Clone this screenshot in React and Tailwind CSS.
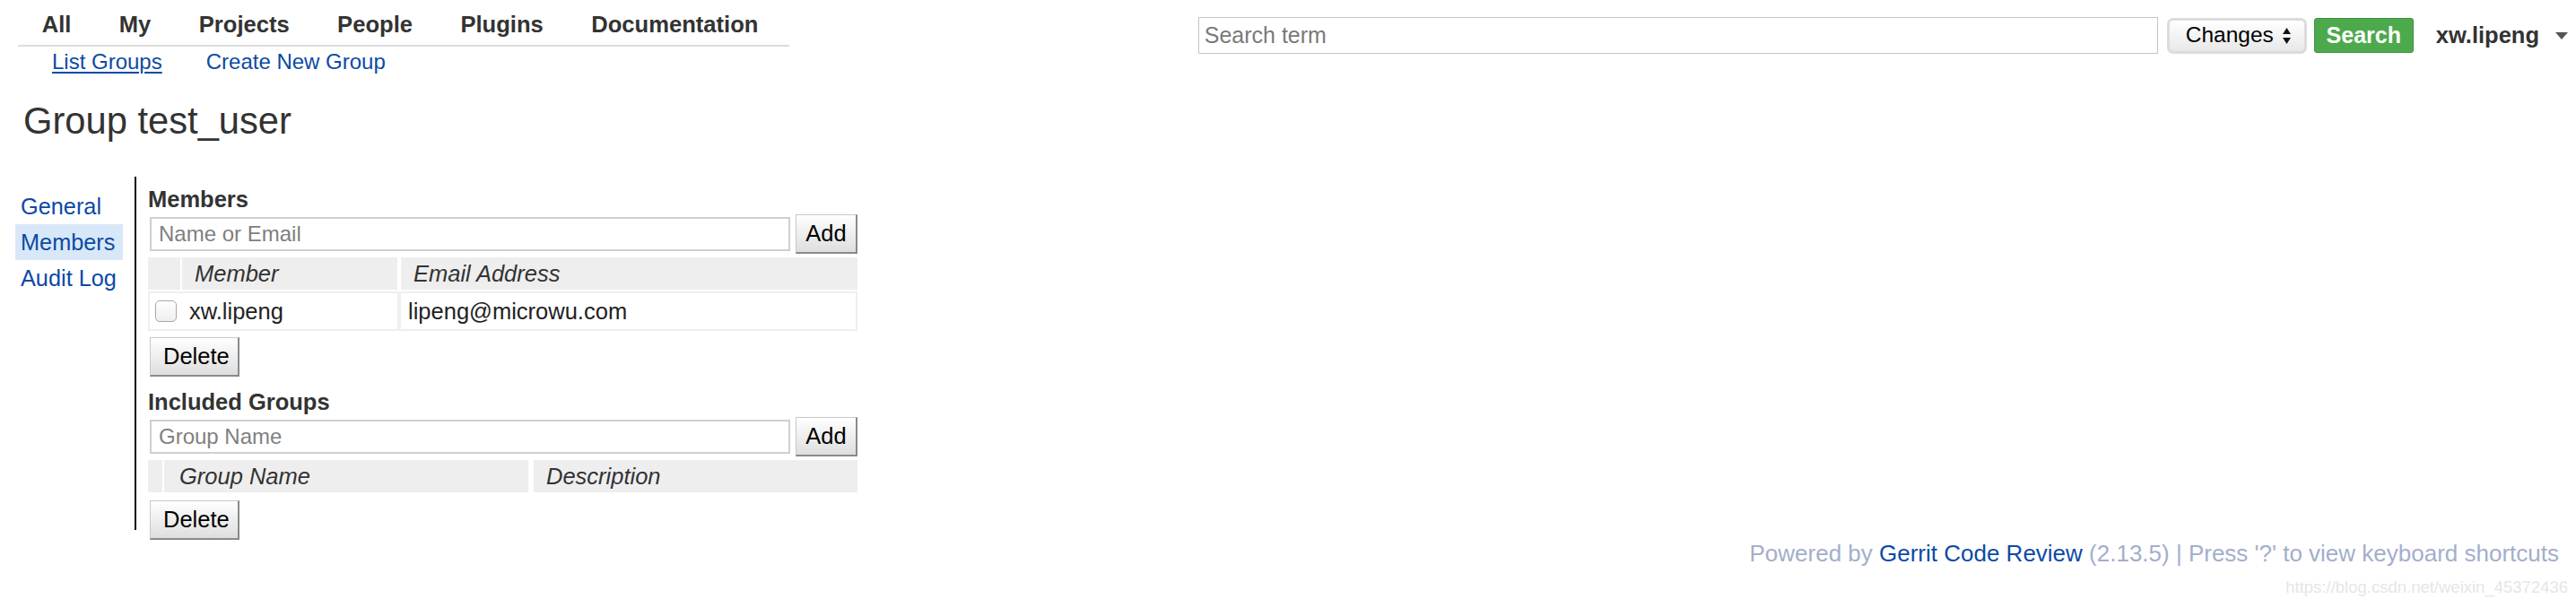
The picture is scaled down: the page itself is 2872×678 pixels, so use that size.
import React from 'react';

const NAV = ['All', 'My', 'Projects', 'People', 'Plugins', 'Documentation'];

function GrayButton({ children, className = '' }) {
  return (
    <button
      className={`h-[44px] border border-[#c8c8c8] border-r-[#8a8a8a] border-b-[#8a8a8a] border-r-2 border-b-2 bg-gradient-to-b from-white to-[#dedede] px-[14px] text-[25.5px] leading-none text-black ${className}`}
    >
      {children}
    </button>
  );
}

function HeadCell({ children, className = '' }) {
  return (
    <div className={`flex h-full items-center bg-[#eeeeee] pl-[14px] italic text-[25.5px] text-[#333] ${className}`}>
      {children}
    </div>
  );
}

function AddRow({ placeholder }) {
  return (
    <div className="flex items-center gap-[6px]">
      <input
        placeholder={placeholder}
        className="ml-[2px] h-[38px] w-[714px] border-2 border-[#cfcfcf] px-[8px] text-[24px] text-[#333] placeholder:text-[#808080] outline-none"
      />
      <GrayButton className="w-[69px] !px-0">Add</GrayButton>
    </div>
  );
}

export default function App() {
  return (
    <div className="relative h-[678px] w-[2872px] overflow-hidden bg-white font-['Liberation_Sans',Arial,sans-serif] text-[#333]">
      {/* Top bar */}
      <div className="flex items-start justify-between">
        <div>
          <div className="ml-[20px] flex w-[860px] border-b-2 border-[#dddddd] pt-[12px] pb-[8px]">
            {NAV.map(item => (
              <span key={item} className="px-[26.7px] text-[25.6px] font-bold leading-[30px] text-[#333]">
                {item}
              </span>
            ))}
          </div>
          <div className="mt-[3px] ml-[58px] flex gap-[49px] text-[24px] leading-[28px] text-[#0c4aa6]">
            <a className="underline underline-offset-[3px]">List Groups</a>
            <a>Create New Group</a>
          </div>
        </div>

        <div className="flex items-center pt-[19px] pr-[9px]">
          <input
            placeholder="Search term"
            className="h-[41px] w-[1070px] border border-[#c4c4c4] px-[6px] text-[25px] text-[#333] placeholder:text-[#7a7a7a] outline-none"
          />
          <div className="ml-[10px] flex h-[40px] w-[156px] items-center justify-between rounded-[7px] border-[3px] border-[#dcdcdc] bg-gradient-to-b from-white to-[#e8e8e8] pr-[14px] pl-[18px] text-[24.5px] text-black">
            <span>Changes</span>
            <svg width="11" height="20" viewBox="0 0 11 20">
              <path d="M5.5 1 L10 8 H1 Z" fill="#111" />
              <path d="M5.5 19 L10 12 H1 Z" fill="#111" />
            </svg>
          </div>
          <button className="ml-[8px] h-[39px] w-[111px] rounded-[3px] border border-[#3e913e] bg-[#4caa4c] text-[25px] font-bold text-white">
            Search
          </button>
          <span className="ml-[25px] text-[25.5px] font-bold text-[#333]">xw.lipeng</span>
          <svg className="ml-[18px]" width="14" height="8" viewBox="0 0 14 8">
            <path d="M0 0 H14 L7 8 Z" fill="#555" />
          </svg>
        </div>
      </div>

      {/* Title */}
      <h1 className="mt-[28px] ml-[26px] text-[41.7px] leading-[48px] text-[#333]">Group test_user</h1>

      {/* Main */}
      <div className="mt-[38px] flex">
        <div className="ml-[17px] flex w-[120px] flex-col pt-[13px] text-[25.3px] leading-[40px] text-[#0c4aa6]">
          <a className="px-[6px]">General</a>
          <a className="bg-[#d8e8f8] px-[6px]">Members</a>
          <a className="px-[6px]">Audit Log</a>
        </div>

        <div className="ml-[13px] h-[394px] w-[2px] bg-black" />

        <div className="ml-[13px] flex w-[791px] flex-col pt-[10px]">
          <div className="text-[25.5px] font-bold leading-[30px] text-[#333]">Members</div>
          <div className="mt-[2px]">
            <AddRow placeholder="Name or Email" />
          </div>

          <div className="mt-[4px] flex h-[36px]">
            <HeadCell className="w-[36px] !pl-0" />
            <HeadCell className="ml-[2px] w-[240px]">Member</HeadCell>
            <HeadCell className="ml-[4px] flex-1">Email Address</HeadCell>
          </div>
          <div className="mt-[2px] flex h-[44px] text-[25.5px] text-[#222]">
            <div className="flex w-[278px] items-center border-2 border-r-0 border-[#efefef] pl-[6px]">
              <span className="h-[24px] w-[24px] rounded-[5px] border border-[#a8a8a8] bg-gradient-to-b from-white to-[#eeeeee]" />
              <span className="ml-[14px]">xw.lipeng</span>
            </div>
            <div className="w-[4px] bg-[#efefef]" />
            <div className="flex flex-1 items-center border-2 border-l-0 border-[#efefef] pl-[8px]">
              lipeng@microwu.com
            </div>
          </div>
          <div className="mt-[7px]">
            <GrayButton className="ml-[2px] w-[100px]">Delete</GrayButton>
          </div>

          <div className="mt-[13px] text-[25.5px] font-bold leading-[30px] text-[#333]">Included Groups</div>
          <div className="mt-[2px]">
            <AddRow placeholder="Group Name" />
          </div>
          <div className="mt-[4px] flex h-[36px]">
            <HeadCell className="w-[16px] !pl-0" />
            <HeadCell className="ml-[2px] w-[406px] !pl-[17px]">Group Name</HeadCell>
            <HeadCell className="ml-[6px] flex-1">Description</HeadCell>
          </div>
          <div className="mt-[9px]">
            <GrayButton className="ml-[2px] w-[100px]">Delete</GrayButton>
          </div>
        </div>
      </div>

      {/* Footer */}
      <div className="pr-[19px] text-right text-[26px] leading-[30px] text-[#a3aecb]">
        Powered by <a className="text-[#0c4aa6]">Gerrit Code Review</a> (2.13.5) | Press '?' to view keyboard shortcuts
      </div>
      <div className="mt-[13px] pr-[9px] text-right text-[18.5px] leading-[20px] text-[#e6e6e6]">
        https://blog.csdn.net/weixin_45372436
      </div>
    </div>
  );
}
